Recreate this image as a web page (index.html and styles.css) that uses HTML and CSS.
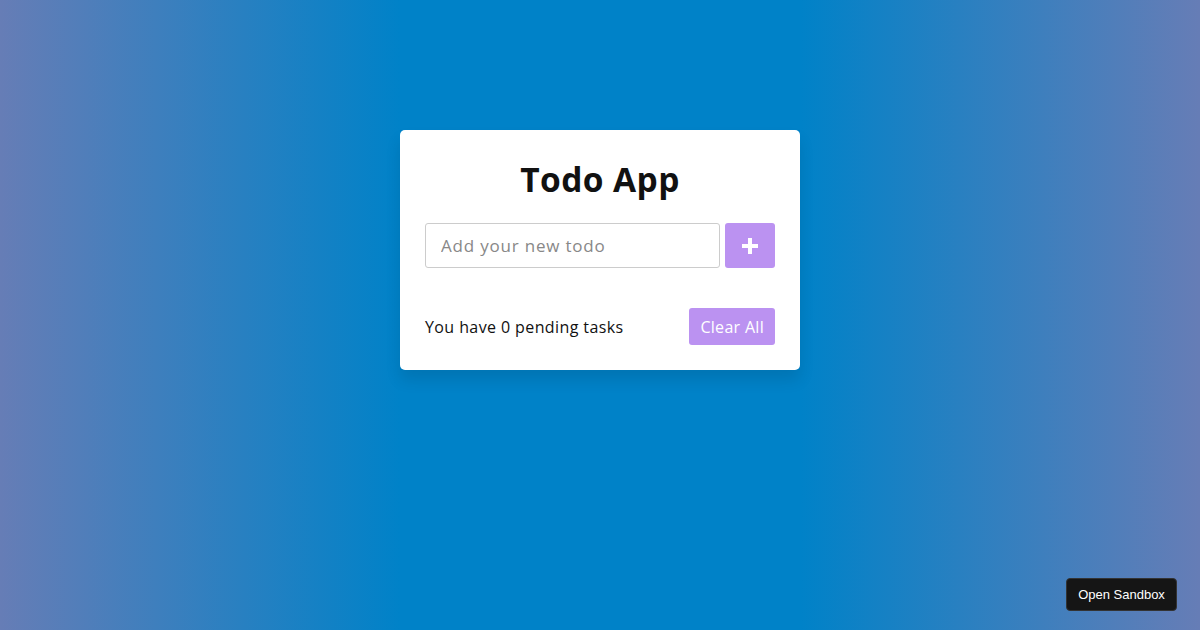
FILE: index.html
```html
<!DOCTYPE html>
<html>
<head>
<meta charset="utf-8">
<link rel="stylesheet" href="styles.css">
</head>
<body>
<div class="page">
  <div class="card">
    <h1 class="title">Todo App</h1>
    <div class="input-row">
      <input class="todo-input" type="text" placeholder="Add your new todo">
      <button class="add-btn" aria-label="Add">
        <svg width="20" height="20" viewBox="0 0 20 20"><path d="M10 2v16M2 10h16" stroke="#fff" stroke-width="4" stroke-linecap="butt"/></svg>
      </button>
    </div>
    <div class="footer">
      <span class="pending">You have 0 pending tasks</span>
      <button class="clear-btn">Clear All</button>
    </div>
  </div>
</div>
<button class="sandbox-btn">Open Sandbox</button>
</body>
</html>
```
FILE: styles.css
```css
* { box-sizing: border-box; }
html, body { margin: 0; padding: 0; height: 100%; }
body {
  background: linear-gradient(to right, #667db6, #0082c8, #0082c8, #667db6);
  font-family: "Open Sans", "Noto Sans", sans-serif;
  overflow: hidden;
}
.page {
  display: flex;
  justify-content: center;
  padding-top: 130px;
}
.card {
  width: 400px;
  background: #fff;
  border-radius: 5px;
  padding: 25px;
  box-shadow: 0 10px 15px rgba(0,0,0,0.1);
}
.title {
  margin: 0;
  text-align: center;
  font-size: 33.5px;
  font-weight: 700;
  line-height: 48px;
  color: #111;
  letter-spacing: 0.4px;
}
.input-row {
  display: flex;
  gap: 5px;
  margin-top: 20px;
  height: 45px;
}
.todo-input {
  flex: 1;
  height: 45px;
  border: 1px solid #ccc;
  border-radius: 3px;
  padding: 0 15px;
  font-family: inherit;
  font-size: 17px;
  letter-spacing: 0.8px;
  outline: none;
}
.todo-input::placeholder { color: #888; }
.add-btn {
  width: 50px;
  height: 45px;
  border: none;
  border-radius: 3px;
  background: #bb92f1;
  display: flex;
  align-items: center;
  justify-content: center;
  padding: 0;
}
.footer {
  display: flex;
  justify-content: space-between;
  align-items: center;
  margin-top: 40px;
}
.pending {
  font-size: 16px;
  letter-spacing: 0.4px;
  color: #111;
}
.clear-btn {
  height: 37px;
  border: none;
  border-radius: 3px;
  background: #bb92f1;
  color: #fff;
  font-family: inherit;
  font-size: 16px;
  letter-spacing: 0.3px;
  padding: 0 11px;
}
.sandbox-btn {
  position: fixed;
  right: 23px;
  bottom: 19px;
  width: 111px;
  height: 33px;
  background: #151515;
  border: 1px solid #333;
  border-radius: 4px;
  color: #fff;
  font-family: "Liberation Sans", Arial, sans-serif;
  font-size: 13px;
  padding: 0;
}
```
